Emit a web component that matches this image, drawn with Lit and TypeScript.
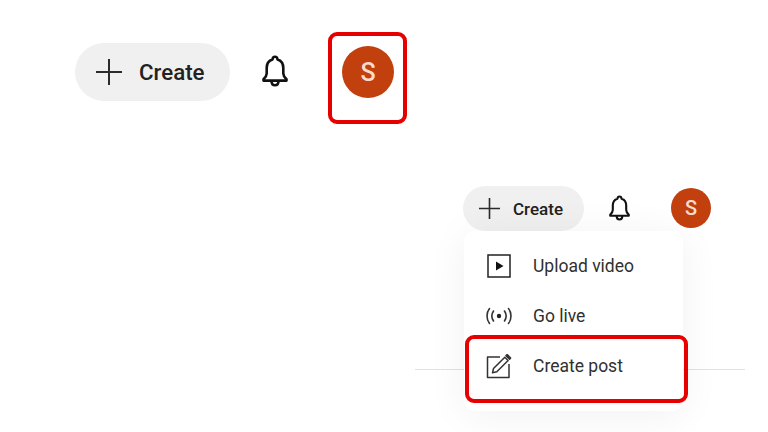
import { LitElement, html, css } from 'lit'
import { customElement } from 'lit/decorators.js'

const plus = (size: number) => html`
  <svg width=${size} height=${size} viewBox="0 0 26 26" fill="none" stroke="#2b2b2b" stroke-width="2">
    <path d="M13 0v26M0 13h26" />
  </svg>
`

const bell = (w: number, h: number) => html`
  <svg width=${w} height=${h} viewBox="0 0 26 32" fill="none" stroke="#111" stroke-width="2.6" stroke-linejoin="round">
    <path d="M13 1.800c1.500 0 2.400 1 2.500 2.600 4 1.200 5.800 4.600 5.800 8.600v5.600c0 2.400 1.300 3.900 3.200 5.700v1.300H1.500v-1.300c1.900-1.800 3.200-3.300 3.200-5.700V13c0-4 1.800-7.400 5.800-8.600.1-1.600 1-2.600 2.500-2.600z" />
    <path d="M9.500 26c0 2.600 1.500 4.300 3.500 4.300s3.500-1.700 3.500-4.300" />
  </svg>
`

const uploadIcon = html`
  <svg width="24" height="24" viewBox="0 0 24 24" fill="none">
    <rect x="1" y="1" width="22" height="22" stroke="#222" stroke-width="1.500" />
    <path d="M9 7.500l7.500 4.500L9 16.500z" fill="#111" />
  </svg>
`

const liveIcon = html`
  <svg width="28" height="20" viewBox="0 0 28 20" fill="none" stroke="#333" stroke-width="1.600" stroke-linecap="round">
    <circle cx="14" cy="10" r="2.200" fill="#222" stroke="none" />
    <path d="M4.500 2.500C1.200 6.500 1.200 13.500 4.500 17.500M8.500 5C6.500 8 6.500 12 8.500 15" />
    <path d="M23.500 2.500C26.800 6.500 26.800 13.500 23.500 17.500M19.500 5C21.500 8 21.500 12 19.500 15" />
  </svg>
`

const postIcon = html`
  <svg width="26" height="25" viewBox="0 0 26 25" fill="none" stroke="#333" stroke-width="1.500" stroke-linejoin="round">
    <path d="M14 3H1.500v20.500H23V10" />
    <path d="M6.500 18.800l1-4.300L18.800 3.200l3.300 3.300L10.800 17.800z" />
    <path d="M20 1.600l1.200-1 3.400 3.400-1 1.200z" fill="#333" />
  </svg>
`

@customElement('app-root')
export class AppRoot extends LitElement {
  static styles = css`
    :host {
      display: block;
      width: 768px;
      height: 432px;
      overflow: hidden;
      background: #fff;
      font-family: Roboto, 'Liberation Sans', sans-serif;
      color: #222;
    }

    .bar {
      display: flex;
      align-items: flex-start;
    }

    .bar-large {
      padding: 32px 0 0 75px;
      height: 92px;
    }

    .bar-small {
      position: relative;
      margin-top: 62px;
      padding-left: 463px;
      height: 45px;
    }

    .create {
      display: flex;
      align-items: center;
      box-sizing: border-box;
      border-radius: 999px;
      background: #f0f0f0;
      font-weight: 500;
    }

    .bar-large .create {
      width: 155px;
      height: 58px;
      margin-top: 11px;
      padding-left: 21px;
      gap: 17px;
      font-size: 22.300px;
    }

    .bar-small .create {
      width: 121px;
      height: 45px;
      padding-left: 16px;
      gap: 13px;
      font-size: 17px;
    }

    .bell {
      display: flex;
    }

    .bar-large .bell {
      margin: 23px 0 0 32px;
    }

    .bar-small .bell {
      margin: 9px 0 0 25px;
    }

    .avatar {
      display: flex;
      align-items: center;
      justify-content: center;
      border-radius: 50%;
      background: #c1400e;
      color: #fbdccc;
      font-weight: 500;
    }

    .avatar-large {
      width: 52px;
      height: 52px;
      margin-left: 1px;
      font-size: 25px;
    }

    .avatar-small {
      width: 40px;
      height: 40px;
      margin: 2px 0 0 41px;
      font-size: 20px;
    }

    .highlight {
      box-sizing: border-box;
      border: 4px solid #e60000;
      border-radius: 9px;
    }

    .avatar-box {
      display: flex;
      justify-content: center;
      width: 79px;
      height: 92px;
      margin-left: 40px;
      padding-top: 10px;
    }

    .rule {
      height: 1px;
      margin: 138px 0 0 415px;
      width: 330px;
      background: #e2e2e2;
    }

    .menu {
      position: absolute;
      top: 45px;
      left: 464px;
      width: 219px;
      height: 180px;
      padding-top: 10px;
      box-sizing: border-box;
      border-radius: 10px;
      background: #fff;
      box-shadow: 0 4px 40px rgba(0, 0, 0, 0.06);
      font-size: 17.500px;
      color: #303030;
    }

    .item {
      display: flex;
      align-items: center;
      height: 50px;
    }

    .icon {
      display: flex;
      justify-content: center;
      width: 28px;
      margin: 0 21px 0 21px;
    }

    .item span + span {
      margin-left: -1px;
    }

    .menu-box {
      position: absolute;
      top: 149px;
      left: 465px;
      width: 223px;
      height: 68px;
    }
  `

  render() {
    return html`
      <div class="bar bar-large">
        <div class="create">${plus(26)}<span>Create</span></div>
        <div class="bell">${bell(26, 32)}</div>
        <div class="highlight avatar-box">
          <div class="avatar avatar-large">S</div>
        </div>
      </div>
      <div class="bar bar-small">
        <div class="create">${plus(21)}<span>Create</span></div>
        <div class="bell">${bell(21, 26)}</div>
        <div class="avatar avatar-small">S</div>
        <div class="menu">
          <div class="item"><span class="icon">${uploadIcon}</span><span>Upload video</span></div>
          <div class="item"><span class="icon">${liveIcon}</span><span>Go live</span></div>
          <div class="item"><span class="icon">${postIcon}</span><span>Create post</span></div>
        </div>
        <div class="highlight menu-box"></div>
      </div>
      <div class="rule"></div>
    `
  }
}
